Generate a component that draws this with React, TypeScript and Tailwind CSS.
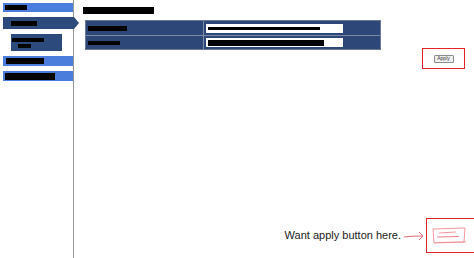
import React from 'react'

// redacted label bar
function Bar({ className }: { className: string }) {
  return <div className={`bg-black ${className}`} />
}

function Sidebar() {
  return (
    <div className="relative flex w-[74px] shrink-0 flex-col border-r border-[#9a9a9a] pt-[3px]">
      <div className="ml-[3px] flex h-[9px] items-center bg-[#4a7ddc] pl-[2px]">
        <Bar className="h-[5px] w-[22px]" />
      </div>
      <div className="relative z-10 ml-[3px] mt-[5px] flex h-[12px] w-[76px] items-center bg-[#2d4a7c] pl-[8px] [clip-path:polygon(0_0,calc(100%-5px)_0,100%_50%,calc(100%-5px)_100%,0_100%)]">
        <Bar className="h-[5px] w-[26px]" />
      </div>
      <div className="ml-[11px] mt-[5px] flex h-[17px] w-[51px] flex-col items-start justify-center gap-[2px] bg-[#2d4a7c] pl-[1px]">
        <Bar className="h-[4px] w-[32px]" />
        <Bar className="ml-[6px] h-[4px] w-[13px]" />
      </div>
      <div className="ml-[3px] mt-[5px] flex h-[10px] items-center bg-[#4a7ddc] pl-[3px]">
        <Bar className="h-[6px] w-[38px]" />
      </div>
      <div className="ml-[3px] mt-[5px] flex h-[10px] items-center bg-[#4a7ddc] pl-[2px]">
        <Bar className="h-[7px] w-[50px]" />
      </div>
    </div>
  )
}

function FormTable() {
  const rows = [
    { label: 'w-[39px] h-[5px]', value: 'w-[112px] h-[3px]' },
    { label: 'w-[32px] h-[4px]', value: 'w-[116px] h-[6px]' },
  ]
  return (
    <div className="ml-[2px] mt-[6px] w-[296px] border border-[#6b7a94] bg-[#2d4778]">
      {rows.map((r, i) => (
        <div
          key={i}
          className={`flex h-[14px] items-center ${i > 0 ? 'border-t border-[#7d8aa3]' : ''}`}
        >
          <div className="flex h-full w-[118px] items-center border-r border-[#7d8aa3] pl-[2px]">
            <Bar className={r.label} />
          </div>
          <div className="ml-[2px] flex h-[9px] w-[137px] items-center bg-white pl-[2px]">
            <Bar className={r.value} />
          </div>
        </div>
      ))}
    </div>
  )
}

export default function App() {
  return (
    <div className="flex h-[258px] w-[474px] overflow-hidden bg-white font-['Liberation_Sans',Arial,sans-serif]">
      <Sidebar />
      <div className="flex flex-1 flex-col pl-[9px] pt-[7px]">
        <Bar className="h-[7px] w-[71px]" />
        <FormTable />

        <div className="mt-[-2px] flex justify-end pr-[9px]">
          <div className="flex h-[21px] w-[43px] items-center justify-center border-[1.5px] border-[#e0242a]">
            <button className="flex h-[8px] w-[20px] items-center justify-center rounded-[1px] border border-[#8c8c8c] bg-[#efefef] text-[5px] leading-none text-[#333]">
              Apply
            </button>
          </div>
        </div>

        <div className="mb-[5px] mt-auto flex items-center justify-end">
          <span className="text-[11px] leading-none text-[#222]">Want apply button here.</span>
          <svg width="22" height="10" viewBox="0 0 22 10" className="ml-[2px]">
            <path d="M1 6 Q8 5 19 5" stroke="#e05a63" strokeWidth="0.9" fill="none" />
            <path d="M16 1 L20 5 L16 9" stroke="#e05a63" strokeWidth="0.9" fill="none" />
          </svg>
          <div className="ml-[1px] mr-[-4px] flex h-[35px] w-[52px] shrink-0 items-center border-[1.5px] border-[#e0242a] pl-[5px]">
            <svg width="36" height="20" viewBox="0 0 36 20">
              <path d="M1 3 L33 2 L32 16 L2 17 Z" stroke="#ef8a92" strokeWidth="0.9" fill="none" />
              <path d="M7 7 L24 6" stroke="#ef8a92" strokeWidth="0.9" />
              <path d="M5 11 L27 10.5" stroke="#e8707a" strokeWidth="0.9" />
              <path d="M3 16.5 L34 16" stroke="#ef8a92" strokeWidth="0.8" />
            </svg>
          </div>
        </div>
      </div>
    </div>
  )
}
